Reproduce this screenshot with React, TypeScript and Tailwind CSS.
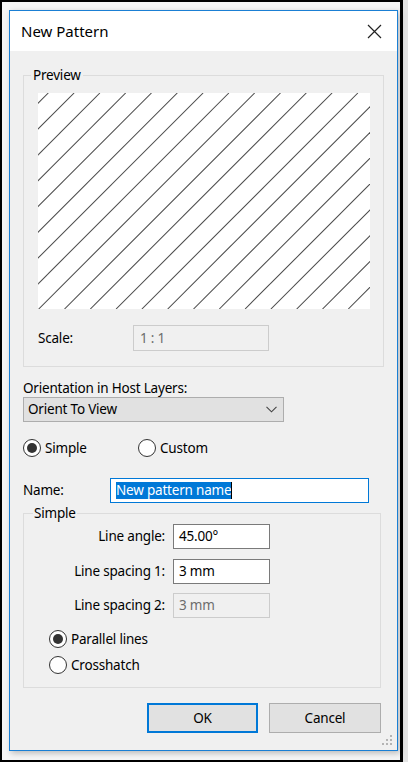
import React from "react";

const font = { fontFamily: '"Noto Sans", "Open Sans", sans-serif' };
const T = "text-[13.5px] tracking-[-0.2px]";

function Hatch() {
  const lines = [];
  for (let k = 0; k < 22; k++) {
    const c = 10.3 + 25.8 * k;
    lines.push(<line key={k} x1={c} y1={0} x2={c - 216} y2={216} />);
  }
  return (
    <svg width="332" height="216" className="block bg-white" viewBox="0 0 332 216">
      <g stroke="#4a4a4a" strokeWidth="1.05">{lines}</g>
    </svg>
  );
}

function Radio({ checked, label }: { checked: boolean; label: string }) {
  return (
    <div className="flex items-center h-[20px]">
      <div className="w-[18px] h-[18px] rounded-full border border-[#333333] bg-white flex items-center justify-center">
        {checked && <div className="w-[10px] h-[10px] rounded-full bg-[#333333]" />}
      </div>
      <span className={`ml-[4px] ${T} leading-[20px] text-black`}>{label}</span>
    </div>
  );
}

export default function App() {
  return (
    <div className="w-[408px] h-[762px] bg-[#e4e4e4]" style={font}>
      <div className="w-[403px] h-[762px] border-2 border-r-[3px] border-black bg-[#f5f5f5] pl-[7px] pt-[8px]">
        <div className="relative w-[389px] h-[741px] border border-[#1a7fd4] bg-[#f0f0f0] flex flex-col shadow-[2px_2px_6px_rgba(0,0,0,0.25)]">
          {/* Title bar */}
          <div className="h-[40px] bg-white flex items-center justify-between pl-[11px] pr-[15px]">
            <span className="text-[15px] text-black leading-[20px]">New Pattern</span>
            <svg width="15" height="15" viewBox="0 0 15 15">
              <path d="M1 1 L14 14 M14 1 L1 14" stroke="#222" strokeWidth="1.2" fill="none" />
            </svg>
          </div>

          {/* Body */}
          <div className="flex flex-col pl-[13px] pr-[16px]">
            {/* Preview */}
            <fieldset className="mt-[14px] w-[361px] border border-[#dcdcdc] pl-[14px] pr-[12px] pb-[15px]">
              <legend className={`-ml-[7px] px-[2px] ${T} leading-[20px] text-black`}>Preview</legend>
              <div className="mt-[8px]">
                <Hatch />
              </div>
              <div className="mt-[16px] flex items-center h-[26px]">
                <span className={`w-[95px] ${T} text-black`}>Scale:</span>
                <div className={`w-[136px] h-[26px] border border-[#cccccc] bg-[#f0f0f0] flex items-center pl-[6px] ${T} text-[#6d6d6d]`}>
                  1 : 1
                </div>
              </div>
            </fieldset>

            {/* Orientation */}
            <div className={`mt-[12px] h-[18px] leading-[18px] ${T} text-black`}>Orientation in Host Layers:</div>
            <div className="w-[261px] h-[25px] border border-[#adadad] bg-[#e1e1e1] flex items-center justify-between pl-[4px] pr-[6px]">
              <span className={`${T} text-black`}>Orient To View</span>
              <svg width="11" height="7" viewBox="0 0 11 7">
                <path d="M0.5 0.8 L5.5 5.8 L10.5 0.8" stroke="#444" strokeWidth="1.1" fill="none" />
              </svg>
            </div>

            {/* Simple / Custom */}
            <div className="mt-[16px] flex items-center">
              <div className="w-[115px]">
                <Radio checked label="Simple" />
              </div>
              <Radio checked={false} label="Custom" />
            </div>

            {/* Name */}
            <div className="mt-[20px] flex items-center h-[25px]">
              <span className={`w-[87px] ${T} text-black`}>Name:</span>
              <div className="w-[259px] h-[25px] border border-[#0078d7] bg-white flex items-center pl-[5px]">
                <span className={`bg-[#0078d7] text-white ${T} leading-[17px]`}>New pattern name</span>
                <span className="w-[1px] h-[17px] bg-black" />
              </div>
            </div>

            {/* Simple group */}
            <fieldset className="w-[358px] border border-[#dcdcdc] pb-[12px]">
              <legend className={`ml-[9px] px-[1px] ${T} leading-[20px] text-black`}>Simple</legend>
              <div className="mt-[1px] flex items-center h-[25px]">
                <span className={`w-[141px] text-right ${T} text-black`}>Line angle:</span>
                <div className={`ml-[8px] w-[97px] h-[25px] border border-[#7a7a7a] bg-white flex items-center pl-[5px] ${T} text-black`}>
                  45.00°
                </div>
              </div>
              <div className="mt-[10px] flex items-center h-[25px]">
                <span className={`w-[141px] text-right ${T} text-black`}>Line spacing 1:</span>
                <div className={`ml-[8px] w-[97px] h-[25px] border border-[#7a7a7a] bg-white flex items-center pl-[5px] ${T} text-black`}>
                  3 mm
                </div>
              </div>
              <div className="mt-[9px] flex items-center h-[25px]">
                <span className={`w-[141px] text-right ${T} text-black`}>Line spacing 2:</span>
                <div className={`ml-[8px] w-[97px] h-[25px] border border-[#cccccc] bg-[#f0f0f0] flex items-center pl-[5px] ${T} text-[#6d6d6d]`}>
                  3 mm
                </div>
              </div>
              <div className="mt-[11px] pl-[25px] flex flex-col gap-[6px]">
                <Radio checked label="Parallel lines" />
                <Radio checked={false} label="Crosshatch" />
              </div>
            </fieldset>

            {/* Buttons */}
            <div className="mt-[15px] flex justify-end gap-[11px]">
              <button className={`w-[111px] h-[30px] border-2 border-[#0078d7] bg-[#e1e1e1] ${T} text-black`}>OK</button>
              <button className={`w-[112px] h-[30px] border border-[#adadad] bg-[#e1e1e1] ${T} text-black`}>Cancel</button>
            </div>
          </div>

          {/* Resize grip */}
          <svg className="absolute right-[3px] bottom-[3px]" width="12" height="12" viewBox="0 0 12 12">
            <g fill="#b4b4b4">
              <rect x="8" y="0" width="2" height="2" />
              <rect x="4" y="4" width="2" height="2" />
              <rect x="8" y="4" width="2" height="2" />
              <rect x="0" y="8" width="2" height="2" />
              <rect x="4" y="8" width="2" height="2" />
              <rect x="8" y="8" width="2" height="2" />
            </g>
          </svg>
        </div>
      </div>
    </div>
  );
}
